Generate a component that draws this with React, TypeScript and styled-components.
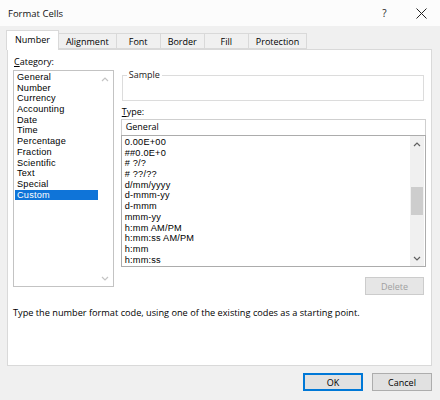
import React from "react";
import styled, { createGlobalStyle } from "styled-components";

const categories = [
  "General",
  "Number",
  "Currency",
  "Accounting",
  "Date",
  "Time",
  "Percentage",
  "Fraction",
  "Scientific",
  "Text",
  "Special",
  "Custom",
];

const formats = [
  "0.00E+00",
  "##0.0E+0",
  "# ?/?",
  "# ??/??",
  "d/mm/yyyy",
  "d-mmm-yy",
  "d-mmm",
  "mmm-yy",
  "h:mm AM/PM",
  "h:mm:ss AM/PM",
  "h:mm",
  "h:mm:ss",
];

const tabs = ["Number", "Alignment", "Font", "Border", "Fill", "Protection"];

function Chevron({ dir, color }: { dir: "up" | "down"; color: string }) {
  const points = dir === "up" ? "1,5 4,2 7,5" : "1,2 4,5 7,2";
  return (
    <svg width='8' height='7' viewBox='0 0 8 7'>
      <polyline points={points} fill='none' stroke={color} strokeWidth='1.2' />
    </svg>
  );
}

export default function App() {
  return (
    <>
      <GlobalStyle />
      <Dialog>
        <TitleBar>
          <Title>Format Cells</Title>
          <TitleButtons>
            <TitleButton>?</TitleButton>
            <TitleButton>
              <svg width='11' height='11' viewBox='0 0 11 11'>
                <path d='M0.5 0.5 L10.5 10.5 M10.5 0.5 L0.5 10.5' stroke='#222' strokeWidth='1' />
              </svg>
            </TitleButton>
          </TitleButtons>
        </TitleBar>

        <TabStrip>
          {tabs.map((t, i) => (
            <Tab key={t} $active={i === 0}>
              {t}
            </Tab>
          ))}
        </TabStrip>

        <Panel>
          <Columns>
            <CategoryColumn>
              <FieldLabel>
                <u>C</u>ategory:
              </FieldLabel>
              <ListBox $height={217}>
                <Items>
                  {categories.map((c) => (
                    <ListItem key={c} $selected={c === "Custom"}>
                      {c}
                    </ListItem>
                  ))}
                </Items>
                <Scrollbar $track='#fff'>
                  <ScrollArrow>
                    <Chevron dir='up' color='#c4c4c4' />
                  </ScrollArrow>
                  <ScrollTrack />
                  <ScrollArrow>
                    <Chevron dir='down' color='#c4c4c4' />
                  </ScrollArrow>
                </Scrollbar>
              </ListBox>
            </CategoryColumn>

            <DetailsColumn>
              <SampleBox>
                <SampleLegend>Sample</SampleLegend>
              </SampleBox>
              <FieldLabel>
                <u>T</u>ype:
              </FieldLabel>
              <TypeInput>General</TypeInput>
              <ListBox $height={132} $dark>
                <Items>
                  {formats.map((f) => (
                    <ListItem key={f}>{f}</ListItem>
                  ))}
                </Items>
                <Scrollbar $track='#f0f0f0'>
                  <ScrollArrow>
                    <Chevron dir='up' color='#606060' />
                  </ScrollArrow>
                  <ScrollTrack>
                    <Thumb />
                  </ScrollTrack>
                  <ScrollArrow>
                    <Chevron dir='down' color='#606060' />
                  </ScrollArrow>
                </Scrollbar>
              </ListBox>
              <DeleteRow>
                <PlainButton disabled>Delete</PlainButton>
              </DeleteRow>
            </DetailsColumn>
          </Columns>
          <Hint>Type the number format code, using one of the existing codes as a starting point.</Hint>
        </Panel>

        <Footer>
          <PlainButton $default>OK</PlainButton>
          <PlainButton>Cancel</PlainButton>
        </Footer>
      </Dialog>
    </>
  );
}

const GlobalStyle = createGlobalStyle`
  html, body {
    margin: 0;
    padding: 0;
    background: #f0f0f0;
  }
`;

const Dialog = styled.div`
  width: 440px;
  height: 400px;
  display: flex;
  flex-direction: column;
  background: #f0f0f0;
  font-family: "Segoe UI", "Open Sans", "Noto Sans", sans-serif;
  font-size: 9px;
  color: #000;
  overflow: hidden;
`;

const TitleBar = styled.div`
  height: 26px;
  display: flex;
  align-items: center;
  padding-left: 8px;
  background: #fcfcfc;
`;

const Title = styled.div`
  font-size: 9.5px;
  color: #111;
`;

const TitleButtons = styled.div`
  margin-left: auto;
  display: flex;
`;

const TitleButton = styled.div`
  width: 37px;
  height: 26px;
  display: flex;
  align-items: center;
  justify-content: center;
  font-size: 10px;
  color: #222;
`;

const TabStrip = styled.div`
  height: 23px;
  display: flex;
  align-items: flex-end;
  padding-left: 6px;
`;

const Tab = styled.div<{ $active?: boolean }>`
  box-sizing: border-box;
  min-width: 45px;
  padding: 0 7px;
  height: ${(p) => (p.$active ? "20px" : "16px")};
  margin-bottom: ${(p) => (p.$active ? "-1px" : "0")};
  margin-left: -1px;
  display: flex;
  align-items: center;
  justify-content: center;
  padding-bottom: ${(p) => (p.$active ? "2px" : "0")};
  background: ${(p) => (p.$active ? "#fff" : "#f0f0f0")};
  border: 1px solid #d9d9d9;
  border-bottom: ${(p) => (p.$active ? "none" : "1px solid #d9d9d9")};
  position: relative;
  z-index: ${(p) => (p.$active ? 1 : 0)};
  &:first-child {
    margin-left: 0;
    padding: 0 8px 2px;
  }
`;

const Panel = styled.div`
  box-sizing: border-box;
  margin: 0 8px 0 7px;
  height: 317px;
  background: #fff;
  border: 1px solid #d9d9d9;
  padding: 6px 5px 0 5px;
`;

const Columns = styled.div`
  display: flex;
  gap: 7px;
`;

const CategoryColumn = styled.div`
  width: 101px;
  display: flex;
  flex-direction: column;
`;

const DetailsColumn = styled.div`
  width: 306px;
  display: flex;
  flex-direction: column;
`;

const FieldLabel = styled.div`
  line-height: 12px;
  height: 14px;
  padding-left: 1px;
`;

const ListBox = styled.div<{ $height: number; $dark?: boolean }>`
  box-sizing: border-box;
  height: ${(p) => p.$height}px;
  border: 1px solid ${(p) => (p.$dark ? "#acacac" : "#c3c3c3")};
  display: flex;
  background: #fff;
`;

const Items = styled.div`
  flex: 1;
  padding: 1px 0 0 1px;
`;

const ListItem = styled.div<{ $selected?: boolean }>`
  height: 10.7px;
  line-height: 10.7px;
  padding-left: 2px;
  font-family: "Liberation Sans", Arial, sans-serif;
  font-size: 9.2px;
  letter-spacing: 0.2px;
  white-space: nowrap;
  background: ${(p) => (p.$selected ? "#0f74d8" : "transparent")};
  color: ${(p) => (p.$selected ? "#fff" : "#000")};
`;

const Scrollbar = styled.div<{ $track: string }>`
  width: 14px;
  margin: 0 1px 0 0;
  display: flex;
  flex-direction: column;
  background: ${(p) => p.$track};
`;

const ScrollArrow = styled.div`
  height: 16px;
  display: flex;
  align-items: center;
  justify-content: center;
`;

const ScrollTrack = styled.div`
  flex: 1;
  padding-top: 35px;
`;

const Thumb = styled.div`
  height: 28px;
  margin: 0 1px;
  background: #cdcdcd;
`;

const SampleBox = styled.fieldset`
  box-sizing: border-box;
  height: 32px;
  margin: 13px 2px 5px 1px;
  padding: 0 3px;
  border: 1px solid #dcdcdc;
  min-inline-size: 0;
`;

const SampleLegend = styled.legend`
  padding: 0 2px;
  margin-left: 1px;
  line-height: 12px;
  color: #222;
`;

const TypeInput = styled.div`
  box-sizing: border-box;
  height: 16px;
  margin-top: -1px;
  border: 1px solid #cfcfcf;
  border-bottom: none;
  padding-left: 4px;
  line-height: 14px;
`;

const DeleteRow = styled.div`
  display: flex;
  justify-content: flex-end;
  padding: 10px 2px 0 0;
`;

const PlainButton = styled.button<{ $default?: boolean }>`
  box-sizing: border-box;
  width: 60px;
  height: 18px;
  padding: 0;
  font-family: inherit;
  font-size: 9px;
  color: #000;
  background: #e1e1e1;
  border: 1px solid ${(p) => (p.$default ? "#0078d7" : "#adadad")};
  box-shadow: ${(p) => (p.$default ? "inset 0 0 0 1px #0078d7" : "none")};
  border-radius: 0;

  &:disabled {
    width: 59px;
    color: #a0a0a0;
    background: #e6e6e6;
    border-color: #cccccc;
  }
`;

const Hint = styled.div`
  margin-top: 12px;
  line-height: 12px;
  font-size: 9.2px;
  white-space: nowrap;
`;

const Footer = styled.div`
  display: flex;
  justify-content: flex-end;
  gap: 9px;
  padding: 7px 8px 0 0;
`;
